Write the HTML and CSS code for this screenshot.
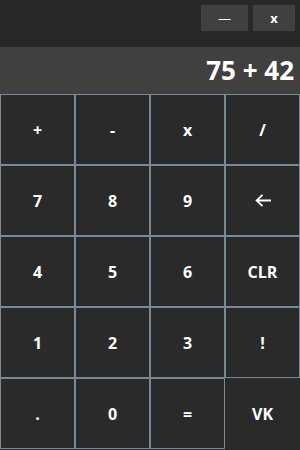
FILE: index.html
```html
<!DOCTYPE html>
<html lang="en">
<head>
    <meta charset="UTF-8">
    <title>Calculator</title>
    <link rel="stylesheet" href="styles.css">
</head>
<body>
    <div class="titlebar">
        <button class="win-button minimize">&mdash;</button>
        <button class="win-button close">x</button>
    </div>
    <div class="display">75 + 42</div>
    <div class="keypad">
        <button>+</button>
        <button>-</button>
        <button>x</button>
        <button>/</button>
        <button>7</button>
        <button>8</button>
        <button>9</button>
        <button aria-label="Backspace">
            <svg class="arrow" width="16" height="13" viewBox="0 0 16 13">
                <path d="M1.5 6.5H16M7.5 0.8L1.6 6.5L7.5 12.2" fill="none" stroke="#fff" stroke-width="1.8"/>
            </svg>
        </button>
        <button>4</button>
        <button>5</button>
        <button>6</button>
        <button>CLR</button>
        <button>1</button>
        <button>2</button>
        <button>3</button>
        <button>!</button>
        <button>.</button>
        <button>0</button>
        <button>=</button>
        <button class="vk">VK</button>
    </div>
</body>
</html>
```

FILE: styles.css
```css
body {
    margin: 0;
    background: #282828;
    font-family: "Open Sans", "DejaVu Sans", sans-serif;
    color: #ffffff;
    width: 300px;
    height: 450px;
    overflow: hidden;
}
button {
    font-family: inherit;
    color: #ffffff;
    border: none;
    padding: 0;
    cursor: pointer;
}
.titlebar {
    display: flex;
    justify-content: flex-end;
    gap: 5px;
    height: 47px;
    padding: 5px 5px 0 0;
    box-sizing: border-box;
}
.win-button {
    background: #404040;
    height: 26px;
    font-size: 13px;
    font-weight: bold;
}
.minimize {
    width: 47px;
    font-weight: normal;
}
.close {
    width: 42px;
}
.display {
    height: 47px;
    background: #404040;
    font-size: 26px;
    font-weight: bold;
    text-align: right;
    padding-right: 6px;
    line-height: 47px;
}
.keypad {
    display: grid;
    grid-template-columns: repeat(4, 1fr);
    grid-auto-rows: 71px;
}
.keypad button {
    background: #2a2a2a;
    border: 1px solid #778899;
    font-size: 16px;
    font-weight: bold;
}
.keypad button.vk {
    border: none;
}
.arrow {
    display: block;
    margin: 0 auto;
}
```
